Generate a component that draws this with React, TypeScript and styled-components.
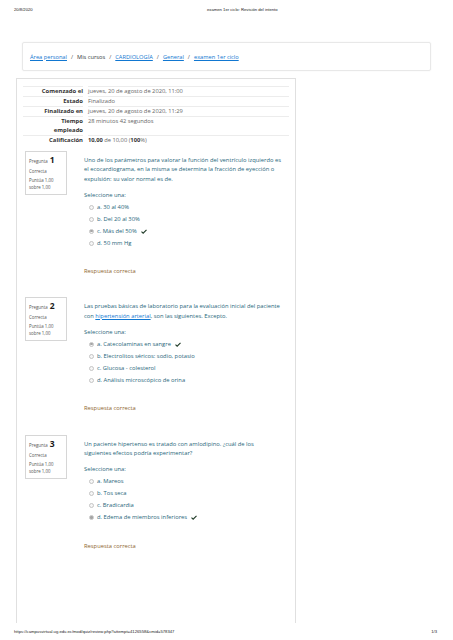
import React from 'react';
import styled, { createGlobalStyle } from 'styled-components';

const GlobalStyle = createGlobalStyle`
  html, body {
    margin: 0;
    padding: 0;
    background: #ffffff;
  }
  body {
    font-family: 'Open Sans', 'Liberation Sans', sans-serif;
    color: #373a3c;
  }
  * {
    box-sizing: border-box;
  }
`;

const Page = styled.div`
  width: 453px;
  height: 640px;
  display: flex;
  flex-direction: column;
  overflow: hidden;
`;

const PrintBar = styled.div<{ $h: number }>`
  display: grid;
  grid-template-columns: 193px auto 1fr;
  align-items: center;
  padding: 0 14px;
  height: ${(p) => p.$h}px;
  font-family: 'Liberation Sans', Arial, sans-serif;
  font-size: 4.2px;
  color: #222;
`;

const PageNum = styled.span`
  justify-self: end;
  padding-right: 2px;
`;

const Breadcrumb = styled.nav`
  margin: 24px 22px 0 22px;
  height: 29px;
  display: flex;
  align-items: center;
  padding: 0 7px;
  border: 1px solid #e8e8e8;
  border-radius: 2px;
  box-shadow: 0 0 2px rgba(0, 0, 0, 0.06);
  font-size: 5.7px;
  color: #373a3c;
`;

const Crumb = styled.a`
  color: #1177d1;
  text-decoration: underline;
`;

const Sep = styled.span`
  margin: 0 4px;
  color: #555;
`;

const MainCard = styled.main`
  margin: 7px 0 0 16px;
  width: 280px;
  flex: 1;
  border: 1px solid #e0e0e0;
  border-bottom: none;
  padding: 7px 6px 0 6px;
`;

const Summary = styled.div`
  display: grid;
  grid-template-columns: 60px 1fr;
  column-gap: 5px;
  font-size: 5.9px;
  line-height: 9px;
`;

const SumLabel = styled.div`
  text-align: right;
  font-weight: 700;
  color: #333;
  border-top: 1px solid #ececec;
  padding-left: 14px;
`;

const SumValue = styled.div`
  color: #666;
  font-size: 5.75px;
  border-top: 1px solid #ececec;
  b {
    color: #333;
  }
`;

const Question = styled.section`
  display: grid;
  grid-template-columns: 42px 1fr;
  column-gap: 17px;
  margin: 6px 0 21px 2px;
`;

const InfoBox = styled.div`
  align-self: start;
  border: 1px solid #d6d6d6;
  padding: 2px 3px 3px 3px;
  font-size: 4.4px;
  color: #555;
`;

const QNumLine = styled.div`
  line-height: 11px;
  b {
    font-size: 8.5px;
    color: #1a1a1a;
    margin-left: 1px;
  }
`;

const InfoLine = styled.div<{ $gap?: number }>`
  line-height: 7px;
  margin-top: ${(p) => p.$gap ?? 0}px;
`;

const Content = styled.div`
  padding-top: 5px;
  color: #27667a;
  font-size: 5.8px;
  line-height: 9.3px;
  padding-right: 8px;
`;

const QText = styled.p`
  margin: 0;
`;

const InlineLink = styled.a`
  color: #1177d1;
  text-decoration: underline;
`;

const Prompt = styled.div`
  margin-top: 7px;
`;

const Options = styled.div`
  margin-top: 1px;
  padding-left: 5px;
`;

const Option = styled.div`
  height: 12px;
  display: flex;
  align-items: center;
  gap: 3px;
`;

const Radio = styled.span<{ $on?: boolean }>`
  width: 5px;
  height: 5px;
  border-radius: 50%;
  border: 0.6px solid #c4c4c4;
  background: #f6f6f6;
  display: inline-flex;
  align-items: center;
  justify-content: center;
  &::after {
    content: '';
    width: 2.2px;
    height: 2.2px;
    border-radius: 50%;
    background: ${(p) => (p.$on ? '#a5a5a5' : 'transparent')};
  }
`;

const Check = styled.svg`
  width: 6px;
  height: 5px;
  margin-left: 1px;
`;

const Outcome = styled.div`
  margin-top: 18px;
  color: #8e662e;
`;

type Opt = { text: string; on?: boolean };

const CheckMark = () => (
  <Check viewBox="0 0 12 10">
    <path d="M1 5.2 L4.3 8.4 L11 1.6" fill="none" stroke="#1e3a26" strokeWidth="2.2" />
  </Check>
);

function QuestionBlock({
  num,
  children,
  options,
}: {
  num: number;
  children: React.ReactNode;
  options: Opt[];
}) {
  return (
    <Question>
      <InfoBox>
        <QNumLine>
          Pregunta <b>{num}</b>
        </QNumLine>
        <InfoLine $gap={1}>Correcta</InfoLine>
        <InfoLine $gap={2}>Puntúa 1,00 sobre 1,00</InfoLine>
      </InfoBox>
      <Content>
        <QText>{children}</QText>
        <Prompt>Seleccione una:</Prompt>
        <Options>
          {options.map((o) => (
            <Option key={o.text}>
              <Radio $on={o.on} />
              <span>{o.text}</span>
              {o.on && <CheckMark />}
            </Option>
          ))}
        </Options>
        <Outcome>Respuesta correcta</Outcome>
      </Content>
    </Question>
  );
}

export default function App() {
  return (
    <Page>
      <GlobalStyle />
      <PrintBar $h={18}>
        <span>20/8/2020</span>
        <span>examen 1er ciclo: Revisión del intento</span>
      </PrintBar>
      <Breadcrumb>
        <Crumb>Área personal</Crumb>
        <Sep>/</Sep>
        <span>Mis cursos</span>
        <Sep>/</Sep>
        <Crumb>CARDIOLOGÍA</Crumb>
        <Sep>/</Sep>
        <Crumb>General</Crumb>
        <Sep>/</Sep>
        <Crumb>examen 1er ciclo</Crumb>
      </Breadcrumb>
      <MainCard>
        <Summary>
          <SumLabel>Comenzado el</SumLabel>
          <SumValue>jueves, 20 de agosto de 2020, 11:00</SumValue>
          <SumLabel>Estado</SumLabel>
          <SumValue>Finalizado</SumValue>
          <SumLabel>Finalizado en</SumLabel>
          <SumValue>jueves, 20 de agosto de 2020, 11:29</SumValue>
          <SumLabel>Tiempo empleado</SumLabel>
          <SumValue>28 minutos 42 segundos</SumValue>
          <SumLabel>Calificación</SumLabel>
          <SumValue>
            <b>10,00</b> de 10,00 (<b>100</b>%)
          </SumValue>
        </Summary>
        <QuestionBlock
          num={1}
          options={[
            { text: 'a. 30 al 40%' },
            { text: 'b. Del 20 al 30%' },
            { text: 'c. Más del 50%', on: true },
            { text: 'd. 50 mm Hg' },
          ]}
        >
          Uno de los parámetros para valorar la función del ventrículo izquierdo es el
          ecocardiograma, en la misma se determina la fracción de eyección o expulsión: su
          valor normal es de.
        </QuestionBlock>
        <QuestionBlock
          num={2}
          options={[
            { text: 'a. Catecolaminas en sangre', on: true },
            { text: 'b. Electrolitos séricos: sodio, potasio' },
            { text: 'c. Glucosa - colesterol' },
            { text: 'd. Análisis microscópico de orina' },
          ]}
        >
          Las pruebas básicas de laboratorio para la evaluación inicial del paciente con{' '}
          <InlineLink>hipertensión arterial</InlineLink>, son las siguientes. Excepto.
        </QuestionBlock>
        <QuestionBlock
          num={3}
          options={[
            { text: 'a. Mareos' },
            { text: 'b. Tos seca' },
            { text: 'c. Bradicardia' },
            { text: 'd. Edema de miembros inferiores', on: true },
          ]}
        >
          Un paciente hipertenso es tratado con amlodipino. ¿cuál de los siguientes efectos
          podría experimentar?
        </QuestionBlock>
      </MainCard>
      <PrintBar $h={17}>
        <span>
          https://campusvirtual.ug.edu.ec/mod/quiz/review.php?attempt=4126558&amp;cmid=578347
        </span>
        <span />
        <PageNum>1/3</PageNum>
      </PrintBar>
    </Page>
  );
}
